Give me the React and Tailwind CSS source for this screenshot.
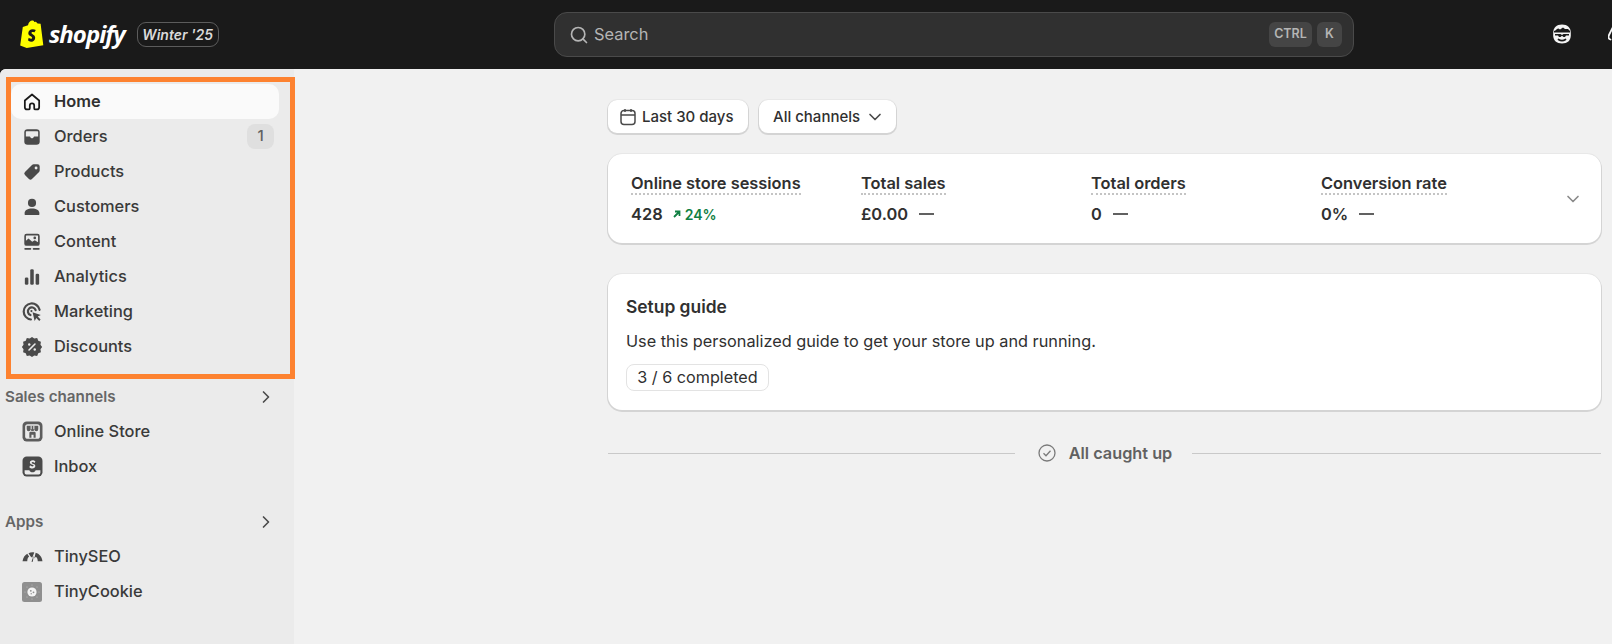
import React from 'react';
import { Search, ChevronDown, ChevronRight } from 'lucide-react';

const font = { fontFamily: 'Inter, sans-serif' };

// icons drawn on a 20x20 box, same look as the admin nav
const HomeIcon = () => (
  <svg viewBox="0 0 20 20" className="w-[24px] h-[24px]" fill="none" stroke="#1a1a1a" strokeWidth="1.600" strokeLinejoin="round">
    <path d="M3.500 8.600 10 3.200l6.500 5.400v6.200a2 2 0 0 1-2 2h-1.300a1.200 1.200 0 0 1-1.200-1.200v-2.400a2 2 0 0 0-4 0v2.400a1.200 1.200 0 0 1-1.200 1.200H5.500a2 2 0 0 1-2-2z" />
  </svg>
);
const OrdersIcon = () => (
  <svg viewBox="0 0 20 20" className="w-[24px] h-[24px]" fill="#4a4a4a">
    <rect x="3" y="3" width="14" height="14" rx="3" />
    <path d="M5 4.700h10a.6.6 0 0 1 .6.6v4.200h-3.100c-.7 0-1 .5-1.200 1-.1.400-.7.700-1.300.7s-1.200-.3-1.300-.7c-.2-.5-.5-1-1.200-1H4.400V5.300a.6.6 0 0 1 .6-.6z" fill="#ebebeb" />
  </svg>
);
const ProductsIcon = () => (
  <svg viewBox="0 0 20 20" className="w-[24px] h-[24px]" fill="#4a4a4a">
    <path fillRule="evenodd" d="M11.500 3h3.500a2 2 0 0 1 2 2v3.500c0 .6-.2 1.100-.6 1.500l-6.400 6.400a2 2 0 0 1-2.800 0l-3.600-3.600a2 2 0 0 1 0-2.800L10 3.600c.4-.4.900-.6 1.500-.6zM13.700 7.700a1.300 1.300 0 1 0 0-2.600 1.300 1.300 0 0 0 0 2.600z" />
  </svg>
);
const CustomersIcon = () => (
  <svg viewBox="0 0 20 20" className="w-[24px] h-[24px]" fill="#4a4a4a">
    <circle cx="10" cy="6.300" r="3.700" />
    <path d="M3.300 15.500c0-2.700 2.900-4.200 6.700-4.200s6.700 1.500 6.700 4.200v1a.8.8 0 0 1-.8.8H4.100a.8.8 0 0 1-.8-.8z" />
  </svg>
);
const ContentIcon = () => (
  <svg viewBox="0 0 20 20" className="w-[24px] h-[24px]" fill="#4a4a4a">
    <path fillRule="evenodd" d="M5 2.500h10a2 2 0 0 1 2 2v7a2 2 0 0 1-2 2H5a2 2 0 0 1-2-2v-7a2 2 0 0 1 2-2zm-.5 6.300 2.300-2 3.400 3 2.300-1.500 3 2V4.500a.5.500 0 0 0-.5-.5H5a.5.500 0 0 0-.5.5z" />
    <circle cx="12.500" cy="6.300" r="1.200" />
    <rect x="3" y="15.500" width="6.300" height="1.500" rx=".7" />
    <rect x="10.700" y="15.500" width="6.300" height="1.500" rx=".7" />
  </svg>
);
const AnalyticsIcon = () => (
  <svg viewBox="0 0 20 20" className="w-[24px] h-[24px]" fill="#4a4a4a">
    <rect x="3.500" y="10.500" width="3.200" height="6.500" rx="1.200" />
    <rect x="8.400" y="3" width="3.200" height="14" rx="1.200" />
    <rect x="13.300" y="7" width="3.200" height="10" rx="1.200" />
  </svg>
);
const MarketingIcon = () => (
  <svg viewBox="0 0 20 20" className="w-[24px] h-[24px]" fill="none" stroke="#4a4a4a">
    <path strokeWidth="2" strokeLinecap="round" d="M9 16.800A7.300 7.300 0 1 1 16.900 8" />
    <path strokeWidth="2" strokeLinecap="round" d="M8.600 12.800A3.600 3.600 0 1 1 13.300 8.300" />
    <circle cx="9.500" cy="9.200" r="1" fill="#4a4a4a" stroke="none" />
    <path d="M10.500 10.200 18 12.700l-2.800 1.500 2.600 2.700-1.200 1.200-2.700-2.700-1.500 2.800z" fill="#4a4a4a" stroke="none" />
  </svg>
);
const DiscountsIcon = () => (
  <svg viewBox="0 0 20 20" className="w-[24px] h-[24px]">
    <path fill="#4a4a4a" d="M10 1.300l2.100 1.500 2.600-.4 1 2.400 2.400 1-.4 2.600 1.500 2.100-1.500 2.100.4 2.600-2.400 1-1 2.400-2.600-.4-2.100 1.500-2.100-1.500-2.600.4-1-2.400-2.400-1 .4-2.600L.8 10.500l1.500-2.100-.4-2.600 2.400-1 1-2.400 2.600.4z" transform="translate(0 -.5)" />
    <path d="M7.300 12.700l5.400-5.400" stroke="#ebebeb" strokeWidth="1.500" strokeLinecap="round" />
    <circle cx="7.500" cy="7.700" r="1.100" fill="#ebebeb" />
    <circle cx="12.500" cy="12.300" r="1.100" fill="#ebebeb" />
  </svg>
);
const StoreIcon = () => (
  <svg viewBox="0 0 20 20" className="w-[21px] h-[21px]">
    <rect x="0.500" y="0.500" width="19" height="19" rx="4" fill="#5c5c5c" />
    <rect x="3" y="3" width="14" height="14" rx="2.500" fill="#ebebeb" />
    <path d="M4.500 4.500h11v3.300a1.800 1.800 0 0 1-3.700 0 1.800 1.800 0 0 1-3.600 0 1.800 1.800 0 0 1-3.700 0z" fill="#5c5c5c" />
    <path d="M8.200 4.500h1v3.300h-1zM10.800 4.500h1v3.300h-1z" fill="#ebebeb" />
    <path d="M7 16v-4.500a1.200 1.200 0 0 1 1.200-1.200h3.600a1.200 1.200 0 0 1 1.200 1.200V16h-2v-2.800H9V16z" fill="#5c5c5c" />
  </svg>
);
const InboxIcon = () => (
  <svg viewBox="0 0 20 20" className="w-[21px] h-[21px]">
    <rect x="0.500" y="0.500" width="19" height="19" rx="4" fill="#4a4a4a" />
    <path d="M2.500 13.500h4.500c.5 1.300 1.600 2 3 2s2.500-.7 3-2h4.500v2.500a1.500 1.500 0 0 1-1.500 1.500H4a1.500 1.500 0 0 1-1.500-1.500z" fill="#ebebeb" />
    <path d="M12.800 5.200C12 4.500 11.200 4 10 4 8.500 4 7.500 5 7.500 6.100c0 2.300 3.600 1.600 3.600 3 0 .5-.5.800-1.200.8-.8 0-1.600-.5-2.200-1.100L7 10.800c.7.700 1.700 1.200 2.800 1.200 1.700 0 2.900-1 2.900-2.400 0-2.400-3.500-1.800-3.500-3.100 0-.4.400-.7 1-.7.600 0 1.200.3 1.700.8z" fill="#ebebeb" />
  </svg>
);
const SeoIcon = () => (
  <svg viewBox="0 0 20 20" className="w-[21px] h-[21px]" fill="#4a4a4a">
    <path d="M.5 14.500C1 11 2.800 8.500 5 7.300l1.800 2.700C5.700 10.900 5 12.300 5 14.500zM6.200 6.800C7.300 6.300 8.600 6 10 6c.6 0 1.100.1 1.700.2l-2 5-1.700-1.500zM13 6.500c3.500 1 6 3.700 6.500 8H15c0-2-.7-3.600-1.800-4.300l-1.500 1.600z" />
    <path d="M11.200 9 9 15h1.300z" />
  </svg>
);
const CookieIcon = () => (
  <svg viewBox="0 0 20 20" className="w-[20px] h-[20px]">
    <rect width="20" height="20" rx="2.500" fill="#8f8f8f" />
    <circle cx="10" cy="10" r="4.600" fill="#f4f4f4" />
    <circle cx="8.800" cy="8.800" r=".9" fill="#8f8f8f" />
    <circle cx="11.500" cy="10.300" r=".9" fill="#8f8f8f" />
    <circle cx="9.200" cy="11.800" r=".7" fill="#8f8f8f" />
    <g fill="#bdbdbd">
      <circle cx="3" cy="10" r=".6" /><circle cx="17" cy="10" r=".6" /><circle cx="10" cy="3" r=".6" /><circle cx="10" cy="17" r=".6" />
      <circle cx="5" cy="5" r=".6" /><circle cx="15" cy="5" r=".6" /><circle cx="5" cy="15" r=".6" /><circle cx="15" cy="15" r=".6" />
    </g>
  </svg>
);

const topNav = [
  ['Home', HomeIcon],
  ['Orders', OrdersIcon],
  ['Products', ProductsIcon],
  ['Customers', CustomersIcon],
  ['Content', ContentIcon],
  ['Analytics', AnalyticsIcon],
  ['Marketing', MarketingIcon],
  ['Discounts', DiscountsIcon],
];

const metrics = [
  { label: 'Online store sessions', value: '428', trend: '24%' },
  { label: 'Total sales', value: '£0.00' },
  { label: 'Total orders', value: '0' },
  { label: 'Conversion rate', value: '0%' },
];

function NavItem({ label, Icon, active, badge }) {
  return (
    <div className={`flex items-center h-[35px] pl-[10px] pr-[5px] gap-[11px] rounded-[10px] text-[16.4px] ${active ? 'bg-[#fafafa] font-semibold text-[#303030]' : 'font-medium text-[#3a3a3a]'}`}>
      <span className="w-[22px] h-[22px] flex items-center justify-center shrink-0">
        <Icon />
      </span>
      <span className="flex-1">{label}</span>
      {badge && (
        <span className="w-[27px] h-[25px] rounded-[8px] bg-[#dfdfdf] text-[#616161] text-[15px] font-medium flex items-center justify-center">{badge}</span>
      )}
    </div>
  );
}

function SectionTitle({ children }) {
  return (
    <div className="flex items-center justify-between h-[22px] pl-[5px] pr-[18px] text-[15.2px] font-semibold text-[#666666]">
      <span>{children}</span>
      <ChevronRight className="w-[20px] h-[20px] text-[#4a4a4a]" strokeWidth={2} />
    </div>
  );
}

function App() {
  return (
    <div className="w-[1612px] h-[644px] overflow-hidden bg-[#1a1a1a] flex flex-col" style={font}>
      {/* top bar */}
      <header className="h-[69px] shrink-0 flex items-center relative">
        <div className="w-[554px] shrink-0 flex items-center pl-[20px]">
          <svg viewBox="0 0 24 28" className="w-[24px] h-[28px] mb-[2px]">
            <path d="M2.800 7 8 5.300C8.700 2 10.500.5 12.500.6c1 0 1.500.6 1.800 1.300l1.600-.2 1.700 1.700 3 .4 2.700 21.400-16.600 2.800L.2 25.500z" fill="#ffff00" />
            <path d="M15.800 10c-.8-.4-1.800-.7-2.900-.7-3 0-4.600 2-4.600 4 0 2.800 3.800 2.900 3.800 4.500 0 .6-.4 1-1.100 1-1.100 0-2.300-1-2.300-1l-.7 2.500s1.200 1.400 3.400 1.400c2.200 0 3.800-1.500 3.800-3.900 0-3.100-3.700-3.400-3.700-4.700 0-.4.200-1 1.300-1 .9 0 1.500.3 1.500.3z" fill="#1a1a1a" />
          </svg>
          <span className="ml-[5px] text-white text-[24px] font-bold italic leading-none tracking-[-1px] mb-[2px]" style={{ fontFamily: '"Open Sans", sans-serif' }}>shopify</span>
          <span className="ml-[12px] h-[25px] w-[82px] flex items-center justify-center rounded-[9px] border border-[#5c5c5c] text-[#d9d9d9] text-[14px] font-semibold italic">Winter '25</span>
        </div>
        <div className="w-[800px] h-[45px] shrink-0 rounded-[13px] bg-[#303030] border border-[#4a4a4a] flex items-center pl-[14px] pr-[11px]">
          <Search className="w-[20px] h-[20px] text-[#b5b5b5]" strokeWidth={2} />
          <span className="ml-[5px] flex-1 text-[16.4px] text-[#b5b5b5]">Search</span>
          <span className="w-[43px] h-[25px] rounded-[6px] bg-[#454545] text-[#b5b5b5] text-[12.5px] font-semibold flex items-center justify-center">CTRL</span>
          <span className="ml-[5px] w-[25px] h-[25px] rounded-[6px] bg-[#454545] text-[#b5b5b5] text-[12.5px] font-semibold flex items-center justify-center">K</span>
        </div>
        {/* avatar mascot, then the bell cut off by the window */}
        <svg viewBox="0 0 20 20" className="absolute left-[1552px] top-[24px] w-[20px] h-[20px]">
          <path d="M10 .5c5.500 0 8.800 3 8.800 8.500v2.500c0 5-3.500 8-8.800 8s-8.800-3-8.800-8V9C1.200 3.500 4.500.5 10 .5z" fill="#f4f4f4" />
          <path d="M2 7c2-.5 3-2.500 4.500-2.500L8 5.500l3-2 2 1.500h3l2 2v1.500H2z" fill="#1a1a1a" />
          <path d="M3 10h5.500l1.500 1 1.500-1H17v1.500h-3l-1 1.500h-1.500L10 11.800 8.500 13H7l-1-1.500H3z" fill="#1a1a1a" />
          <path d="M6.500 15.500c2 1.300 5 1.300 7 0" stroke="#1a1a1a" strokeWidth="1.700" fill="none" strokeLinecap="round" />
        </svg>
        <svg viewBox="0 0 8 20" className="absolute left-[1608px] top-[25px] w-[8px] h-[20px]">
          <path d="M5 2 1 10c-1 2-.5 4 1.500 4.500" stroke="#f4f4f4" strokeWidth="1.800" fill="none" strokeLinecap="round" />
        </svg>
      </header>

      <div className="flex-1 flex min-h-0 bg-[#f1f1f1] rounded-tl-[6px]">
        {/* sidebar */}
        <aside className="w-[294px] shrink-0 bg-[#ebebeb] pt-[8px] rounded-tl-[6px]">
          <div className="ml-[6px] w-[289px] h-[302px] border-[5px] border-[#fd8230] pt-[2px] pr-[11px]">
            {topNav.map(([label, Icon], i) => (
              <NavItem key={label} label={label} Icon={Icon} active={i === 0} badge={label === 'Orders' ? '1' : null} />
            ))}
          </div>
          <div className="mt-[7px]">
            <SectionTitle>Sales channels</SectionTitle>
          </div>
          <div className="mt-[6px] ml-[11px] mr-[15px]">
            <NavItem label="Online Store" Icon={StoreIcon} />
            <NavItem label="Inbox" Icon={InboxIcon} />
          </div>
          <div className="mt-[27px]">
            <SectionTitle>Apps</SectionTitle>
          </div>
          <div className="mt-[6px] ml-[11px] mr-[15px]">
            <NavItem label="TinySEO" Icon={SeoIcon} />
            <NavItem label="TinyCookie" Icon={CookieIcon} />
          </div>
        </aside>

        {/* main */}
        <main className="flex-1 pl-[314px] pr-[11px] pt-[31px] text-[#303030]">
          <div className="flex gap-[11px]">
            <button className="h-[33px] w-[140px] bg-white rounded-[9px] shadow-[0_1px_0_1px_#d4d4d4,0_0_0_1px_#e8e8e8] flex items-center pl-[10px] pt-[1px] gap-[4px] text-[15px] font-medium text-[#303030]">
              <svg viewBox="0 0 20 20" className="w-[20px] h-[20px]" fill="none" stroke="#4a4a4a" strokeWidth="1.500">
                <rect x="3" y="3.500" width="14" height="14" rx="3" />
                <path d="M3 8h14M7 2v3M13 2v3" />
              </svg>
              Last 30 days
            </button>
            <button className="h-[33px] w-[137px] bg-white rounded-[9px] shadow-[0_1px_0_1px_#d4d4d4,0_0_0_1px_#e8e8e8] flex items-center pl-[14px] pt-[1px] gap-[5px] text-[15px] font-medium text-[#303030]">
              All channels
              <ChevronDown className="w-[20px] h-[20px] text-[#4a4a4a]" strokeWidth={2} />
            </button>
          </div>

          <section className="mt-[21px] h-[89px] bg-white rounded-[14px] shadow-[0_1px_0_1px_#d4d4d4,0_0_0_1px_#e8e8e8] flex items-center pl-[23px] relative">
            {metrics.map((m) => (
              <div key={m.label} className="w-[230px]">
                <div className="inline-block align-top text-[16.4px] leading-[20px] font-semibold border-b-2 border-dotted border-[#c4c4c4]">{m.label}</div>
                <div className="mt-[7px] flex items-center h-[20px] text-[16.4px] font-semibold">
                  <span>{m.value}</span>
                  {m.trend ? (
                    <span className="ml-[9px] flex items-center gap-[3px] text-[14px] text-[#108043]">
                      <svg viewBox="0 0 10 10" className="w-[10px] h-[10px]" fill="none" stroke="#108043" strokeWidth="1.800">
                        <path d="M2 8l5-5M3 2.500h4.500V7" />
                      </svg>
                      {m.trend}
                    </span>
                  ) : (
                    <span className="ml-[11px] w-[15px] h-[1.500px] bg-[#616161]" />
                  )}
                </div>
              </div>
            ))}
            <ChevronDown className="absolute right-[18px] top-[35px] w-[20px] h-[20px] text-[#8a8a8a]" strokeWidth={2} />
          </section>

          <section className="mt-[31px] h-[136px] bg-white rounded-[14px] shadow-[0_1px_0_1px_#d4d4d4,0_0_0_1px_#e8e8e8] pl-[18px] pt-[23px]">
            <h2 className="text-[17.4px] leading-[20px] font-semibold">Setup guide</h2>
            <p className="mt-[14px] text-[16.3px] leading-[20px]">Use this personalized guide to get your store up and running.</p>
            <span className="mt-[13px] inline-flex items-center justify-center w-[143px] h-[27px] rounded-[8px] border border-[#e3e3e3] text-[16.2px]">3 / 6 completed</span>
          </section>

          <div className="mt-[31px] flex items-center">
            <div className="w-[407px] h-px bg-[#c9c9c9]" />
            <div className="w-[177px] pl-[2px] flex items-center justify-center gap-[12px] text-[16.3px] font-semibold text-[#616161]">
              <svg viewBox="0 0 20 20" className="w-[20px] h-[20px]" fill="none" stroke="#7a7a7a" strokeWidth="1.300">
                <circle cx="10" cy="10" r="8" />
                <path d="M6.500 10.200 9 12.700l4.500-5" />
              </svg>
              All caught up
            </div>
            <div className="flex-1 h-px bg-[#c9c9c9]" />
          </div>
        </main>
      </div>
    </div>
  );
}

export default App;
